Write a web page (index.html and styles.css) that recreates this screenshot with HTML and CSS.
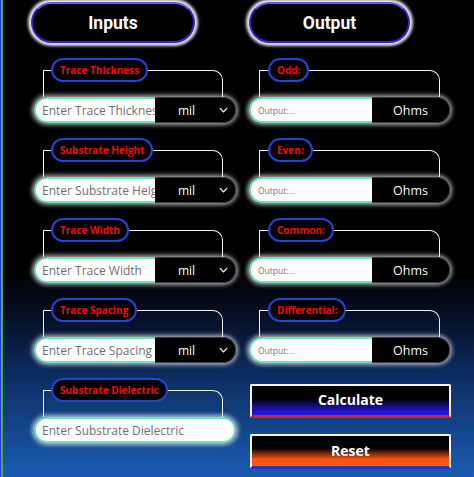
FILE: index.html
```html
<!DOCTYPE html>
<html>
<head>
<meta charset="utf-8">
<link rel="stylesheet" href="styles.css">
</head>
<body>
<div class="page">
  <div class="col col-in">
    <div class="head head-in">Inputs</div>

    <div class="field">
      <div class="frame"><span class="tag">Trace Thickness</span></div>
      <div class="combo">
        <input class="txt" type="text" placeholder="Enter Trace Thickness">
        <div class="unit unit-sel"><span>mil</span><svg viewBox="0 0 10 6" width="9" height="6"><path d="M1 1 L5 5 L9 1" fill="none" stroke="#fff" stroke-width="1.3"/></svg></div>
      </div>
    </div>

    <div class="field">
      <div class="frame"><span class="tag">Substrate Height</span></div>
      <div class="combo">
        <input class="txt" type="text" placeholder="Enter Substrate Height">
        <div class="unit unit-sel"><span>mil</span><svg viewBox="0 0 10 6" width="9" height="6"><path d="M1 1 L5 5 L9 1" fill="none" stroke="#fff" stroke-width="1.3"/></svg></div>
      </div>
    </div>

    <div class="field">
      <div class="frame"><span class="tag">Trace Width</span></div>
      <div class="combo">
        <input class="txt" type="text" placeholder="Enter Trace Width">
        <div class="unit unit-sel"><span>mil</span><svg viewBox="0 0 10 6" width="9" height="6"><path d="M1 1 L5 5 L9 1" fill="none" stroke="#fff" stroke-width="1.3"/></svg></div>
      </div>
    </div>

    <div class="field">
      <div class="frame"><span class="tag">Trace Spacing</span></div>
      <div class="combo">
        <input class="txt" type="text" placeholder="Enter Trace Spacing">
        <div class="unit unit-sel"><span>mil</span><svg viewBox="0 0 10 6" width="9" height="6"><path d="M1 1 L5 5 L9 1" fill="none" stroke="#fff" stroke-width="1.3"/></svg></div>
      </div>
    </div>

    <div class="field">
      <div class="frame"><span class="tag">Substrate Dielectric</span></div>
      <div class="combo">
        <input class="txt txt-full" type="text" placeholder="Enter Substrate Dielectric">
      </div>
    </div>
  </div>

  <div class="col col-out">
    <div class="head head-out">Output</div>

    <div class="field field-out">
      <div class="frame"><span class="tag">Odd:</span></div>
      <div class="combo">
        <input class="txt txt-out" type="text" placeholder="Output:...">
        <div class="unit unit-ohm">Ohms</div>
      </div>
    </div>

    <div class="field field-out">
      <div class="frame"><span class="tag">Even:</span></div>
      <div class="combo">
        <input class="txt txt-out" type="text" placeholder="Output:...">
        <div class="unit unit-ohm">Ohms</div>
      </div>
    </div>

    <div class="field field-out">
      <div class="frame"><span class="tag">Common:</span></div>
      <div class="combo">
        <input class="txt txt-out" type="text" placeholder="Output:...">
        <div class="unit unit-ohm">Ohms</div>
      </div>
    </div>

    <div class="field field-out">
      <div class="frame"><span class="tag">Differential:</span></div>
      <div class="combo">
        <input class="txt txt-out" type="text" placeholder="Output:...">
        <div class="unit unit-ohm">Ohms</div>
      </div>
    </div>

    <button class="btn btn-calc">Calculate</button>
    <button class="btn btn-reset">Reset</button>
  </div>
</div>
</body>
</html>
```

FILE: styles.css
```css
html, body {
  margin: 0;
  padding: 0;
}

body {
  width: 474px;
  height: 477px;
  overflow: hidden;
  background: linear-gradient(180deg, #000 0px, #000 270px, #050d20 310px, #0c2a5c 370px, #1a5cb2 477px);
  border-left: 1px solid #2a3cc8;
  box-sizing: border-box;
  font-family: "Open Sans", "Noto Sans", sans-serif;
}

.page {
  border-left: 2px solid #3cb44a;
  height: 477px;
  box-sizing: border-box;
  display: grid;
  grid-template-columns: 202px 201px;
  column-gap: 13px;
  padding: 2px 0 0 31px;
  align-items: start;
}

.col {
  display: flex;
  flex-direction: column;
}

.head {
  height: 41px;
  box-sizing: border-box;
  background: #000;
  border: 2px solid #3f1ed8;
  border-top-color: #6a5ae8;
  border-radius: 21px;
  box-shadow: 0 0 3px 3px rgba(255, 255, 255, 0.9);
  color: #fff;
  font-family: Roboto, "Liberation Sans", sans-serif;
  font-weight: 700;
  font-size: 17.5px;
  display: flex;
  align-items: center;
  justify-content: center;
}

.head-in {
  width: 164px;
  margin-left: -3px;
}

.head-out {
  width: 161px;
}

.field {
  margin-top: 15px;
}

.frame {
  display: flex;
  align-items: flex-start;
  height: 27px;
  box-sizing: border-box;
  margin: 12px 13px 0 9px;
  border: 1px solid #f2f2f2;
  border-bottom: 0;
  border-top-right-radius: 10px;
}

.field-out .frame {
  margin: 12px 10px 0 10px;
}

.tag {
  margin: -13px 0 0 7px;
  height: 24px;
  box-sizing: border-box;
  padding: 0 7px;
  border: 2px solid #2643d6;
  border-radius: 12px;
  background: #000;
  color: #f00d0d;
  font-weight: 700;
  font-size: 10px;
  display: flex;
  align-items: center;
  white-space: nowrap;
}

.field-out .tag {
  margin-left: 8px;
}

.combo {
  display: flex;
  height: 26px;
  border-radius: 13px;
  box-shadow: 0 0 4px 2px rgba(255, 255, 255, 0.65);
}

.txt {
  flex: 1;
  min-width: 0;
  height: 26px;
  box-sizing: border-box;
  margin: 0;
  border: 2px solid #72e3b6;
  border-right: 0;
  border-radius: 13px 0 0 13px;
  background: #fff;
  padding: 0 0 0 6px;
  font-family: "Open Sans", "Noto Sans", sans-serif;
  font-size: 12px;
  color: #333;
  outline: none;
}

.txt::placeholder {
  color: #6f6f6f;
}

.txt-full {
  border-right: 2px solid #72e3b6;
  border-radius: 13px;
}

.txt-out {
  font-size: 8.5px;
  padding-left: 7px;
}

.txt-out::placeholder {
  color: #777;
}

.unit {
  height: 26px;
  box-sizing: border-box;
  background: #000;
  border: 1px solid #3a3a3a;
  border-left: 0;
  border-radius: 0 13px 13px 0;
  color: #fff;
}

.unit-sel {
  width: 81px;
  display: grid;
  grid-template-columns: 1fr auto;
  align-items: center;
  column-gap: 3px;
  padding-right: 7px;
  font-size: 12px;
}

.unit-sel span {
  text-align: center;
  padding-left: 2px;
}

.unit-ohm {
  width: 78px;
  display: flex;
  align-items: center;
  justify-content: center;
  font-size: 12.5px;
}

.btn {
  display: block;
  width: 201px;
  margin-left: 1px;
  box-sizing: border-box;
  border: 2px solid #f4f4f4;
  border-radius: 2px;
  color: #fff;
  font-family: "Open Sans", "Noto Sans", sans-serif;
  font-weight: 700;
  font-size: 14px;
  padding: 0 0 2px 0;
}

.btn-calc {
  margin-top: 21px;
  height: 34px;
  border-bottom: 3px solid #d8202a;
  background: linear-gradient(180deg, #000 0%, #000 45%, #2410c4 82%, #2a14d4 100%);
}

.btn-reset {
  margin-top: 16px;
  height: 35px;
  border-bottom: 3px solid #2433c8;
  background: linear-gradient(180deg, #000 0%, #000 40%, #ff5510 78%, #ff5a10 100%);
}
```
